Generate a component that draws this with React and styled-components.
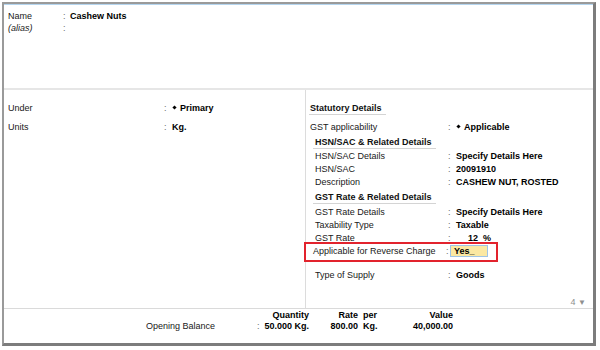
import React from "react";
import styled, { createGlobalStyle } from "styled-components";

const GlobalStyle = createGlobalStyle`
    * { box-sizing: border-box; }
    body {
        margin: 0;
        background: #fff;
        font-family: "Liberation Sans", Arial, sans-serif;
        font-size: 9px;
        color: #1c1c1c;
    }
`;

const statutory = [
    {
        heading: "HSN/SAC & Related Details",
        rows: [
            { label: "HSN/SAC Details", value: "Specify Details Here" },
            { label: "HSN/SAC", value: "20091910" },
            { label: "Description", value: "CASHEW NUT, ROSTED" },
        ],
    },
    {
        heading: "GST Rate & Related Details",
        rows: [
            { label: "GST Rate Details", value: "Specify Details Here" },
            { label: "Taxability Type", value: "Taxable" },
            { label: "GST Rate", value: "12", rate: true },
        ],
    },
];

export default function App() {
    return (
        <>
            <GlobalStyle />
            <Frame>
                <TopSection>
                    <Row $label={55} $colon={7}>
                        <Label>Name</Label>
                        <Colon>:</Colon>
                        <Value>Cashew Nuts</Value>
                    </Row>
                    <Row $label={55} $colon={7}>
                        <Label $italic>(alias)</Label>
                        <Colon>:</Colon>
                        <span />
                    </Row>
                </TopSection>

                <Middle>
                    <LeftColumn>
                        <Row $label={156}>
                            <Label>Under</Label>
                            <Colon>:</Colon>
                            <Value><Diamond />Primary</Value>
                        </Row>
                        <Row $label={156} $gap={7}>
                            <Label>Units</Label>
                            <Colon>:</Colon>
                            <Value>Kg.</Value>
                        </Row>
                    </LeftColumn>

                    <RightColumn>
                        <Heading $main>Statutory Details</Heading>
                        <Row $label={138} $gap={6}>
                            <Label>GST applicability</Label>
                            <Colon>:</Colon>
                            <Value><Diamond />Applicable</Value>
                        </Row>

                        {statutory.map((group, i) => (
                            <Group key={group.heading} $first={i === 0}>
                                <Heading>{group.heading}</Heading>
                                {group.rows.map((row, j) => (
                                    <SubRow key={row.label} $label={133} $gap={j === 0 ? (i === 0 ? 1 : 2) : 0}>
                                        <Label>{row.label}</Label>
                                        <Colon>:</Colon>
                                        {row.rate ? (
                                            <RateValue>{row.value}<Percent>%</Percent></RateValue>
                                        ) : (
                                            <Value>{row.value}</Value>
                                        )}
                                    </SubRow>
                                ))}
                                {i === 1 && (
                                    <HighlightRow $label={133}>
                                        <Label>Applicable for Reverse Charge</Label>
                                        <Colon>:</Colon>
                                        <Value><InputBox>Yes_</InputBox></Value>
                                    </HighlightRow>
                                )}
                            </Group>
                        ))}

                        <Group>
                            <SubRow $label={133} $gap={9}>
                                <Label>Type of Supply</Label>
                                <Colon>:</Colon>
                                <Value>Goods</Value>
                            </SubRow>
                        </Group>

                        <PageHint>4 <span>▼</span></PageHint>
                    </RightColumn>
                </Middle>

                <Footer>
                    <BalanceGrid>
                        <span />
                        <span />
                        <Head>Quantity</Head>
                        <Head>Rate</Head>
                        <Head $left>per</Head>
                        <Head>Value</Head>

                        <BalanceLabel>Opening Balance</BalanceLabel>
                        <Colon>:</Colon>
                        <Amount>50.000 Kg.</Amount>
                        <Amount>800.00</Amount>
                        <Amount $left>Kg.</Amount>
                        <Amount>40,000.00</Amount>
                    </BalanceGrid>
                </Footer>
            </Frame>
        </>
    );
}

const Frame = styled.div`
    margin: 2px 0 0 2px;
    width: 594px;
    height: 344px;
    display: flex;
    flex-direction: column;
    background: #fff;
    border-left: 2px solid #9a9a9a;
    border-top: 2px solid #9a9a9a;
    border-right: 3px solid #7c7c7c;
    border-bottom: 3px solid #7c7c7c;
    box-shadow: inset 0 1px 0 #b4d5ef;
`;
const TopSection = styled.div`
    flex: none;
    height: 86px;
    padding: 6px 0 0 4px;
    border-bottom: 2px solid #e6e6e6;
`;
const Middle = styled.div`
    flex: none;
    height: 219px;
    display: flex;
    border-bottom: 1px solid #dadada;
`;
const LeftColumn = styled.div`
    width: 302px;
    padding: 12px 0 0 4px;
    border-right: 1px solid #dcdcdc;
`;
const RightColumn = styled.div`
    flex: 1;
    display: flex;
    flex-direction: column;
    padding: 12px 0 0 4px;
`;
const Row = styled.div`
    display: grid;
    grid-template-columns: ${(p) => p.$label}px ${(p) => p.$colon || 8}px auto;
    line-height: 12px;
    margin-top: ${(p) => p.$gap || 0}px;
`;
const SubRow = styled(Row)`
    line-height: 13px;
`;
const HighlightRow = styled(SubRow)`
    width: 194px;
    margin: -3px 0 -4px -9px;
    padding: 1px 0 2px 7px;
    border: 2px solid #e2232d;
`;
const Label = styled.span`
    color: #202020;
    font-style: ${(p) => (p.$italic ? "italic" : "normal")};
    white-space: nowrap;
`;
const Colon = styled.span`
    color: #6a6a6a;
`;
const Value = styled.span`
    font-weight: 700;
    color: #000;
    white-space: nowrap;
`;
const RateValue = styled(Value)`
    padding-left: 12px;
`;
const Percent = styled.span`
    margin-left: 5px;
`;
const Diamond = styled.span`
    display: inline-block;
    width: 3px;
    height: 3px;
    margin: 0 4px 2px 1px;
    background: #000;
    transform: rotate(45deg);
    vertical-align: middle;
`;
const InputBox = styled.span`
    display: inline-block;
    width: 38px;
    height: 12px;
    line-height: 10px;
    margin-left: -4px;
    padding-left: 3px;
    background: #fbe8a2;
    border: 1px solid #9fc4e6;
    vertical-align: top;
`;
const Heading = styled.div`
    align-self: flex-start;
    font-weight: 700;
    color: #111;
    line-height: 12px;
    margin-left: ${(p) => (p.$main ? -1 : 0)}px;
    padding: 0 4px 0 ${(p) => (p.$main ? 1 : 2)}px;
    border-bottom: 1px solid #d4d4d4;
`;
const Group = styled.div`
    display: flex;
    flex-direction: column;
    margin: ${(p) => (p.$first ? 3 : 2)}px 0 0 3px;

    ${SubRow} {
        padding-left: 2px;
    }
    ${HighlightRow} {
        padding-left: 7px;
    }
`;
const PageHint = styled.div`
    margin-top: auto;
    align-self: flex-end;
    padding-right: 7px;
    line-height: 10px;
    color: #8f8f8f;
    font-size: 9px;

    span {
        font-size: 8px;
    }
`;
const Footer = styled.div`
    flex: 1;
    padding: 1px 0 0 142px;
`;
const BalanceGrid = styled.div`
    display: grid;
    grid-template-columns: 111px 7px 45px 49px 25px 70px;
    line-height: 11px;

    & > :nth-child(5),
    & > :nth-child(11) {
        padding-left: 5px;
    }
`;
const Head = styled.span`
    font-weight: 700;
    color: #000;
    text-align: ${(p) => (p.$left ? "left" : "right")};
    white-space: nowrap;
`;
const Amount = styled(Head)``;
const BalanceLabel = styled.span`
    color: #202020;
`;
